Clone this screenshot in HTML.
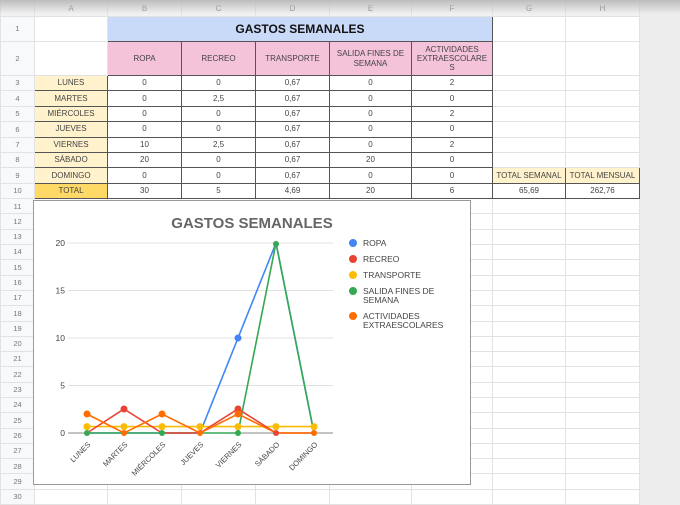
<!DOCTYPE html>
<html><head><meta charset="utf-8"><style>
body{margin:0;width:680px;height:504px;overflow:hidden;background:#ededed;font-family:"Liberation Sans",Arial,sans-serif;position:relative}
table{position:absolute;left:0;top:0;border-collapse:collapse;table-layout:fixed;width:639px;background:#fff}
td{border:1px solid #e2e2e2;padding:0;text-align:center;font-size:8px;color:#444;overflow:hidden;white-space:nowrap;line-height:1}
td.h{background:#f8f9fa;color:#777;font-size:7.5px}
tr.ch td{background:#f1f1f1;color:#888}
.b{border:1px solid #555}
.day{background:#fff2cc}
.tot{background:#ffd966}
.pk{background:#f4c2d9;white-space:normal;line-height:1.15}
.tt{background:#c9daf8;font-weight:bold;font-size:12px;color:#111}
.shade{position:absolute;left:0;top:0;width:680px;height:14px;background:linear-gradient(#bdbdbd,rgba(200,200,200,0));pointer-events:none}
</style></head><body>
<table>
<colgroup><col style="width:34px"><col style="width:73px"><col style="width:74px"><col style="width:74px"><col style="width:74px"><col style="width:82px"><col style="width:81px"><col style="width:73px"><col style="width:74px"></colgroup>
<tr class="ch" style="height:16px"><td></td><td>A</td><td>B</td><td>C</td><td>D</td><td>E</td><td>F</td><td>G</td><td>H</td></tr>
<tr style="height:25px"><td class="h">1</td><td></td><td class="tt b" colspan="5">GASTOS SEMANALES</td><td></td><td></td></tr>
<tr style="height:34px"><td class="h">2</td><td></td><td class="pk b">ROPA</td><td class="pk b">RECREO</td><td class="pk b">TRANSPORTE</td><td class="pk b">SALIDA FINES DE SEMANA</td><td class="pk b">ACTIVIDADES<br>EXTRAESCOLARE<br>S</td><td></td><td></td></tr>
<tr style="height:15.4px"><td class="h">3</td><td class="day b">LUNES</td><td class="b">0</td><td class="b">0</td><td class="b">0,67</td><td class="b">0</td><td class="b">2</td><td></td><td></td></tr>
<tr style="height:15.4px"><td class="h">4</td><td class="day b">MARTES</td><td class="b">0</td><td class="b">2,5</td><td class="b">0,67</td><td class="b">0</td><td class="b">0</td><td></td><td></td></tr>
<tr style="height:15.4px"><td class="h">5</td><td class="day b">MIÉRCOLES</td><td class="b">0</td><td class="b">0</td><td class="b">0,67</td><td class="b">0</td><td class="b">2</td><td></td><td></td></tr>
<tr style="height:15.4px"><td class="h">6</td><td class="day b">JUEVES</td><td class="b">0</td><td class="b">0</td><td class="b">0,67</td><td class="b">0</td><td class="b">0</td><td></td><td></td></tr>
<tr style="height:15.4px"><td class="h">7</td><td class="day b">VIERNES</td><td class="b">10</td><td class="b">2,5</td><td class="b">0,67</td><td class="b">0</td><td class="b">2</td><td></td><td></td></tr>
<tr style="height:15.4px"><td class="h">8</td><td class="day b">SÁBADO</td><td class="b">20</td><td class="b">0</td><td class="b">0,67</td><td class="b">20</td><td class="b">0</td><td></td><td></td></tr>
<tr style="height:15.4px"><td class="h">9</td><td class="day b">DOMINGO</td><td class="b">0</td><td class="b">0</td><td class="b">0,67</td><td class="b">0</td><td class="b">0</td><td class="day b">TOTAL SEMANAL</td><td class="day b">TOTAL MENSUAL</td></tr>
<tr style="height:15.4px"><td class="h">10</td><td class="tot b">TOTAL</td><td class="b">30</td><td class="b">5</td><td class="b">4,69</td><td class="b">20</td><td class="b">6</td><td class="b">65,69</td><td class="b">262,76</td></tr>
<tr style="height:15.3px"><td class="h">11</td><td></td><td></td><td></td><td></td><td></td><td></td><td></td><td></td></tr>
<tr style="height:15.3px"><td class="h">12</td><td></td><td></td><td></td><td></td><td></td><td></td><td></td><td></td></tr>
<tr style="height:15.3px"><td class="h">13</td><td></td><td></td><td></td><td></td><td></td><td></td><td></td><td></td></tr>
<tr style="height:15.3px"><td class="h">14</td><td></td><td></td><td></td><td></td><td></td><td></td><td></td><td></td></tr>
<tr style="height:15.3px"><td class="h">15</td><td></td><td></td><td></td><td></td><td></td><td></td><td></td><td></td></tr>
<tr style="height:15.3px"><td class="h">16</td><td></td><td></td><td></td><td></td><td></td><td></td><td></td><td></td></tr>
<tr style="height:15.3px"><td class="h">17</td><td></td><td></td><td></td><td></td><td></td><td></td><td></td><td></td></tr>
<tr style="height:15.3px"><td class="h">18</td><td></td><td></td><td></td><td></td><td></td><td></td><td></td><td></td></tr>
<tr style="height:15.3px"><td class="h">19</td><td></td><td></td><td></td><td></td><td></td><td></td><td></td><td></td></tr>
<tr style="height:15.3px"><td class="h">20</td><td></td><td></td><td></td><td></td><td></td><td></td><td></td><td></td></tr>
<tr style="height:15.3px"><td class="h">21</td><td></td><td></td><td></td><td></td><td></td><td></td><td></td><td></td></tr>
<tr style="height:15.3px"><td class="h">22</td><td></td><td></td><td></td><td></td><td></td><td></td><td></td><td></td></tr>
<tr style="height:15.3px"><td class="h">23</td><td></td><td></td><td></td><td></td><td></td><td></td><td></td><td></td></tr>
<tr style="height:15.3px"><td class="h">24</td><td></td><td></td><td></td><td></td><td></td><td></td><td></td><td></td></tr>
<tr style="height:15.3px"><td class="h">25</td><td></td><td></td><td></td><td></td><td></td><td></td><td></td><td></td></tr>
<tr style="height:15.3px"><td class="h">26</td><td></td><td></td><td></td><td></td><td></td><td></td><td></td><td></td></tr>
<tr style="height:15.3px"><td class="h">27</td><td></td><td></td><td></td><td></td><td></td><td></td><td></td><td></td></tr>
<tr style="height:15.3px"><td class="h">28</td><td></td><td></td><td></td><td></td><td></td><td></td><td></td><td></td></tr>
<tr style="height:15.3px"><td class="h">29</td><td></td><td></td><td></td><td></td><td></td><td></td><td></td><td></td></tr>
<tr style="height:15.3px"><td class="h">30</td><td></td><td></td><td></td><td></td><td></td><td></td><td></td><td></td></tr>
</table>
<svg style="position:absolute;left:33px;top:200px" width="438" height="285" font-family="Liberation Sans,Arial,sans-serif">
<rect x="0.5" y="0.5" width="437" height="284" fill="#fff" stroke="#999"/>
<text x="219" y="28" text-anchor="middle" font-size="15" font-weight="bold" fill="#666">GASTOS SEMANALES</text>
<g stroke="#e0e0e0" stroke-width="1">
<line x1="35" y1="43" x2="300" y2="43"/><line x1="35" y1="90.5" x2="300" y2="90.5"/><line x1="35" y1="138" x2="300" y2="138"/><line x1="35" y1="185.5" x2="300" y2="185.5"/>
</g>
<line x1="35" y1="233" x2="300" y2="233" stroke="#888"/>
<g font-size="8.5" fill="#444" text-anchor="end">
<text x="32" y="46">20</text><text x="32" y="93.5">15</text><text x="32" y="141">10</text><text x="32" y="188.5">5</text><text x="32" y="236">0</text>
</g>
<g fill="none" stroke-width="1.6">
<polyline stroke="#4285f4" points="54,233 91,233 129,233 167,233 205,138 243,43 281,233"/>
<polyline stroke="#34a853" points="54,233 91,233 129,233 167,233 205,233 243,43 281,233"/>
<polyline stroke="#fbbc04" points="54,226.6 91,226.6 129,226.6 167,226.6 205,226.6 243,226.6 281,226.6"/>
<polyline stroke="#ea4335" points="54,233 91,209 129,233 167,233 205,209 243,233 281,233"/>
<polyline stroke="#ff6d01" points="54,214 91,233 129,214 167,233 205,214 243,233 281,233"/>
</g>
<g>
<g fill="#34a853"><circle cx="54" cy="233" r="3"/><circle cx="129" cy="233" r="3"/><circle cx="205" cy="233" r="3"/><circle cx="243" cy="44" r="3"/></g>
<g fill="#fbbc04"><circle cx="54" cy="226.6" r="3.5"/><circle cx="91" cy="226.6" r="3.5"/><circle cx="129" cy="226.6" r="3.5"/><circle cx="167" cy="226.6" r="3.5"/><circle cx="205" cy="226.6" r="3.5"/><circle cx="243" cy="226.6" r="3.5"/><circle cx="281" cy="226.6" r="3.5"/></g>
<g fill="#ea4335"><circle cx="91" cy="209" r="3.5"/><circle cx="205" cy="209" r="3.5"/><circle cx="243" cy="233" r="3"/></g>
<g fill="#ff6d01"><circle cx="54" cy="214" r="3.5"/><circle cx="129" cy="214" r="3.5"/><circle cx="205" cy="214" r="3.5"/><circle cx="91" cy="233" r="3"/><circle cx="167" cy="233" r="3"/><circle cx="281" cy="233" r="3"/></g>
<circle cx="205" cy="138" r="3.5" fill="#4285f4"/>
</g>
<g font-size="7.5" fill="#444" text-anchor="end">
<text transform="translate(58,245) rotate(-45)">LUNES</text>
<text transform="translate(95,245) rotate(-45)">MARTES</text>
<text transform="translate(133,245) rotate(-45)">MIÉRCOLES</text>
<text transform="translate(171,245) rotate(-45)">JUEVES</text>
<text transform="translate(209,245) rotate(-45)">VIERNES</text>
<text transform="translate(247,245) rotate(-45)">SÁBADO</text>
<text transform="translate(285,245) rotate(-45)">DOMINGO</text>
</g>
<g font-size="8.5" fill="#444">
<circle cx="320" cy="43" r="4" fill="#4285f4"/><text x="330" y="46">ROPA</text>
<circle cx="320" cy="59" r="4" fill="#ea4335"/><text x="330" y="62">RECREO</text>
<circle cx="320" cy="75" r="4" fill="#fbbc04"/><text x="330" y="78">TRANSPORTE</text>
<circle cx="320" cy="91" r="4" fill="#34a853"/><text x="330" y="94">SALIDA FINES DE</text><text x="330" y="103">SEMANA</text>
<circle cx="320" cy="116" r="4" fill="#ff6d01"/><text x="330" y="119">ACTIVIDADES</text><text x="330" y="128">EXTRAESCOLARES</text>
</g>
</svg>
<div class="shade"></div>
</body></html>
